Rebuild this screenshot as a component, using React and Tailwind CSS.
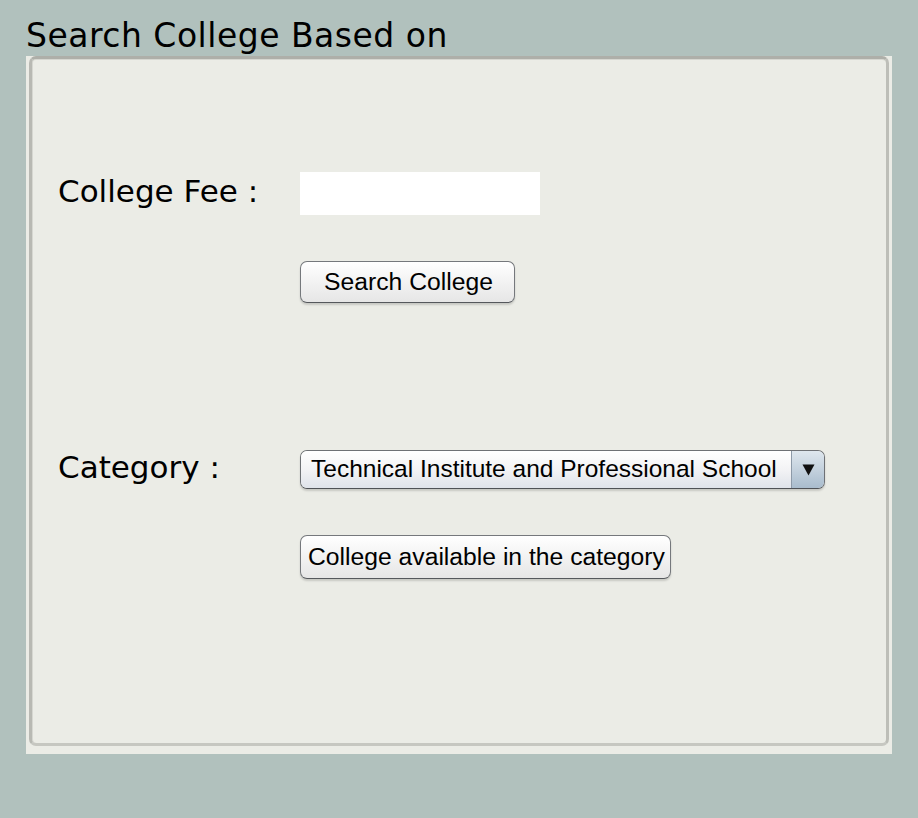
import { useState } from 'react';

export default function App() {
  const [fee, setFee] = useState("");
  const [category, setCategory] = useState("Technical Institute and Professional School");

  return (
    <div className="min-h-[818px] w-full bg-[#b1c1bd]" style={{ fontFamily: '"DejaVu Sans", sans-serif' }}>
      <div className="h-[56px] pl-[26px] pt-[17px] text-[33px] leading-[38px] tracking-[0.5px] text-black">
        Search College Based on
      </div>

      <div className="ml-[26px] w-[866px] h-[698px] bg-[#ebece6] px-[3px]">
        <div className="h-[690px] rounded-[7px] border-[3px] border-t-[#aeafa9] border-l-[#b8b9b3] border-r-[#bdbeb8] border-b-[#c6c7c1] shadow-[inset_0_1px_0_#d6d7d1,inset_1px_0_0_#d6d7d1] pt-[113px] pl-[26px]">
          <div className="flex items-center h-[43px]">
            <label className="w-[242px] -mt-[4px] text-[31px] text-black">College Fee :</label>
            <input
              className="w-[240px] h-[43px] bg-white outline-none px-2 text-[22px]"
              value={fee}
              onChange={(e) => setFee(e.target.value)}
            />
          </div>

          <button
            className="ml-[242px] mt-[46px] w-[215px] h-[42px] rounded-[7px] border border-[#75787c] border-b-[#55585c] bg-gradient-to-b from-white to-[#e6e6e6] shadow-[0_2px_2px_rgba(0,0,0,0.15)] text-[24.7px] text-black pl-[2px]"
            style={{ fontFamily: '"Liberation Sans", Arial, sans-serif' }}
          >
            Search College
          </button>

          <div className="flex items-center h-[39px] mt-[147px]">
            <label className="w-[242px] -mt-[4px] text-[31px] text-black">Category :</label>
            <div
              className="relative flex w-[525px] h-[39px] rounded-[7px] border border-[#6e7175] border-b-[#4f5256] overflow-hidden shadow-[0_2px_2px_rgba(0,0,0,0.15)]"
              style={{ fontFamily: '"Liberation Sans", Arial, sans-serif' }}
            >
              <div className="flex-1 flex items-center pl-[10px] bg-gradient-to-b from-white via-[#f3f3f5] to-[#dfe3ea] text-[24.5px] text-black whitespace-nowrap">
                {category}
              </div>
              <div className="w-[33px] flex items-center justify-center border-l border-[#8d9aa8] bg-gradient-to-b from-[#dfe7ee] to-[#a9bccd]">
                <svg width="13" height="12" viewBox="0 0 13 12">
                  <path d="M0.5 0.5 L12.5 0.5 L6.5 11.5 Z" fill="#111" />
                </svg>
              </div>
              <select
                className="absolute inset-0 opacity-0 cursor-pointer"
                value={category}
                onChange={(e) => setCategory(e.target.value)}
              >
                <option>Technical Institute and Professional School</option>
                <option>Engineering College</option>
                <option>Medical College</option>
              </select>
            </div>
          </div>

          <button
            className="ml-[242px] mt-[46px] w-[371px] h-[44px] rounded-[7px] border border-[#75787c] border-b-[#55585c] bg-gradient-to-b from-white to-[#e6e6e6] shadow-[0_2px_2px_rgba(0,0,0,0.15)] text-[24.7px] text-black text-left pl-[7px] whitespace-nowrap"
            style={{ fontFamily: '"Liberation Sans", Arial, sans-serif' }}
          >
            College available in the category
          </button>
        </div>
      </div>
    </div>
  );
}
